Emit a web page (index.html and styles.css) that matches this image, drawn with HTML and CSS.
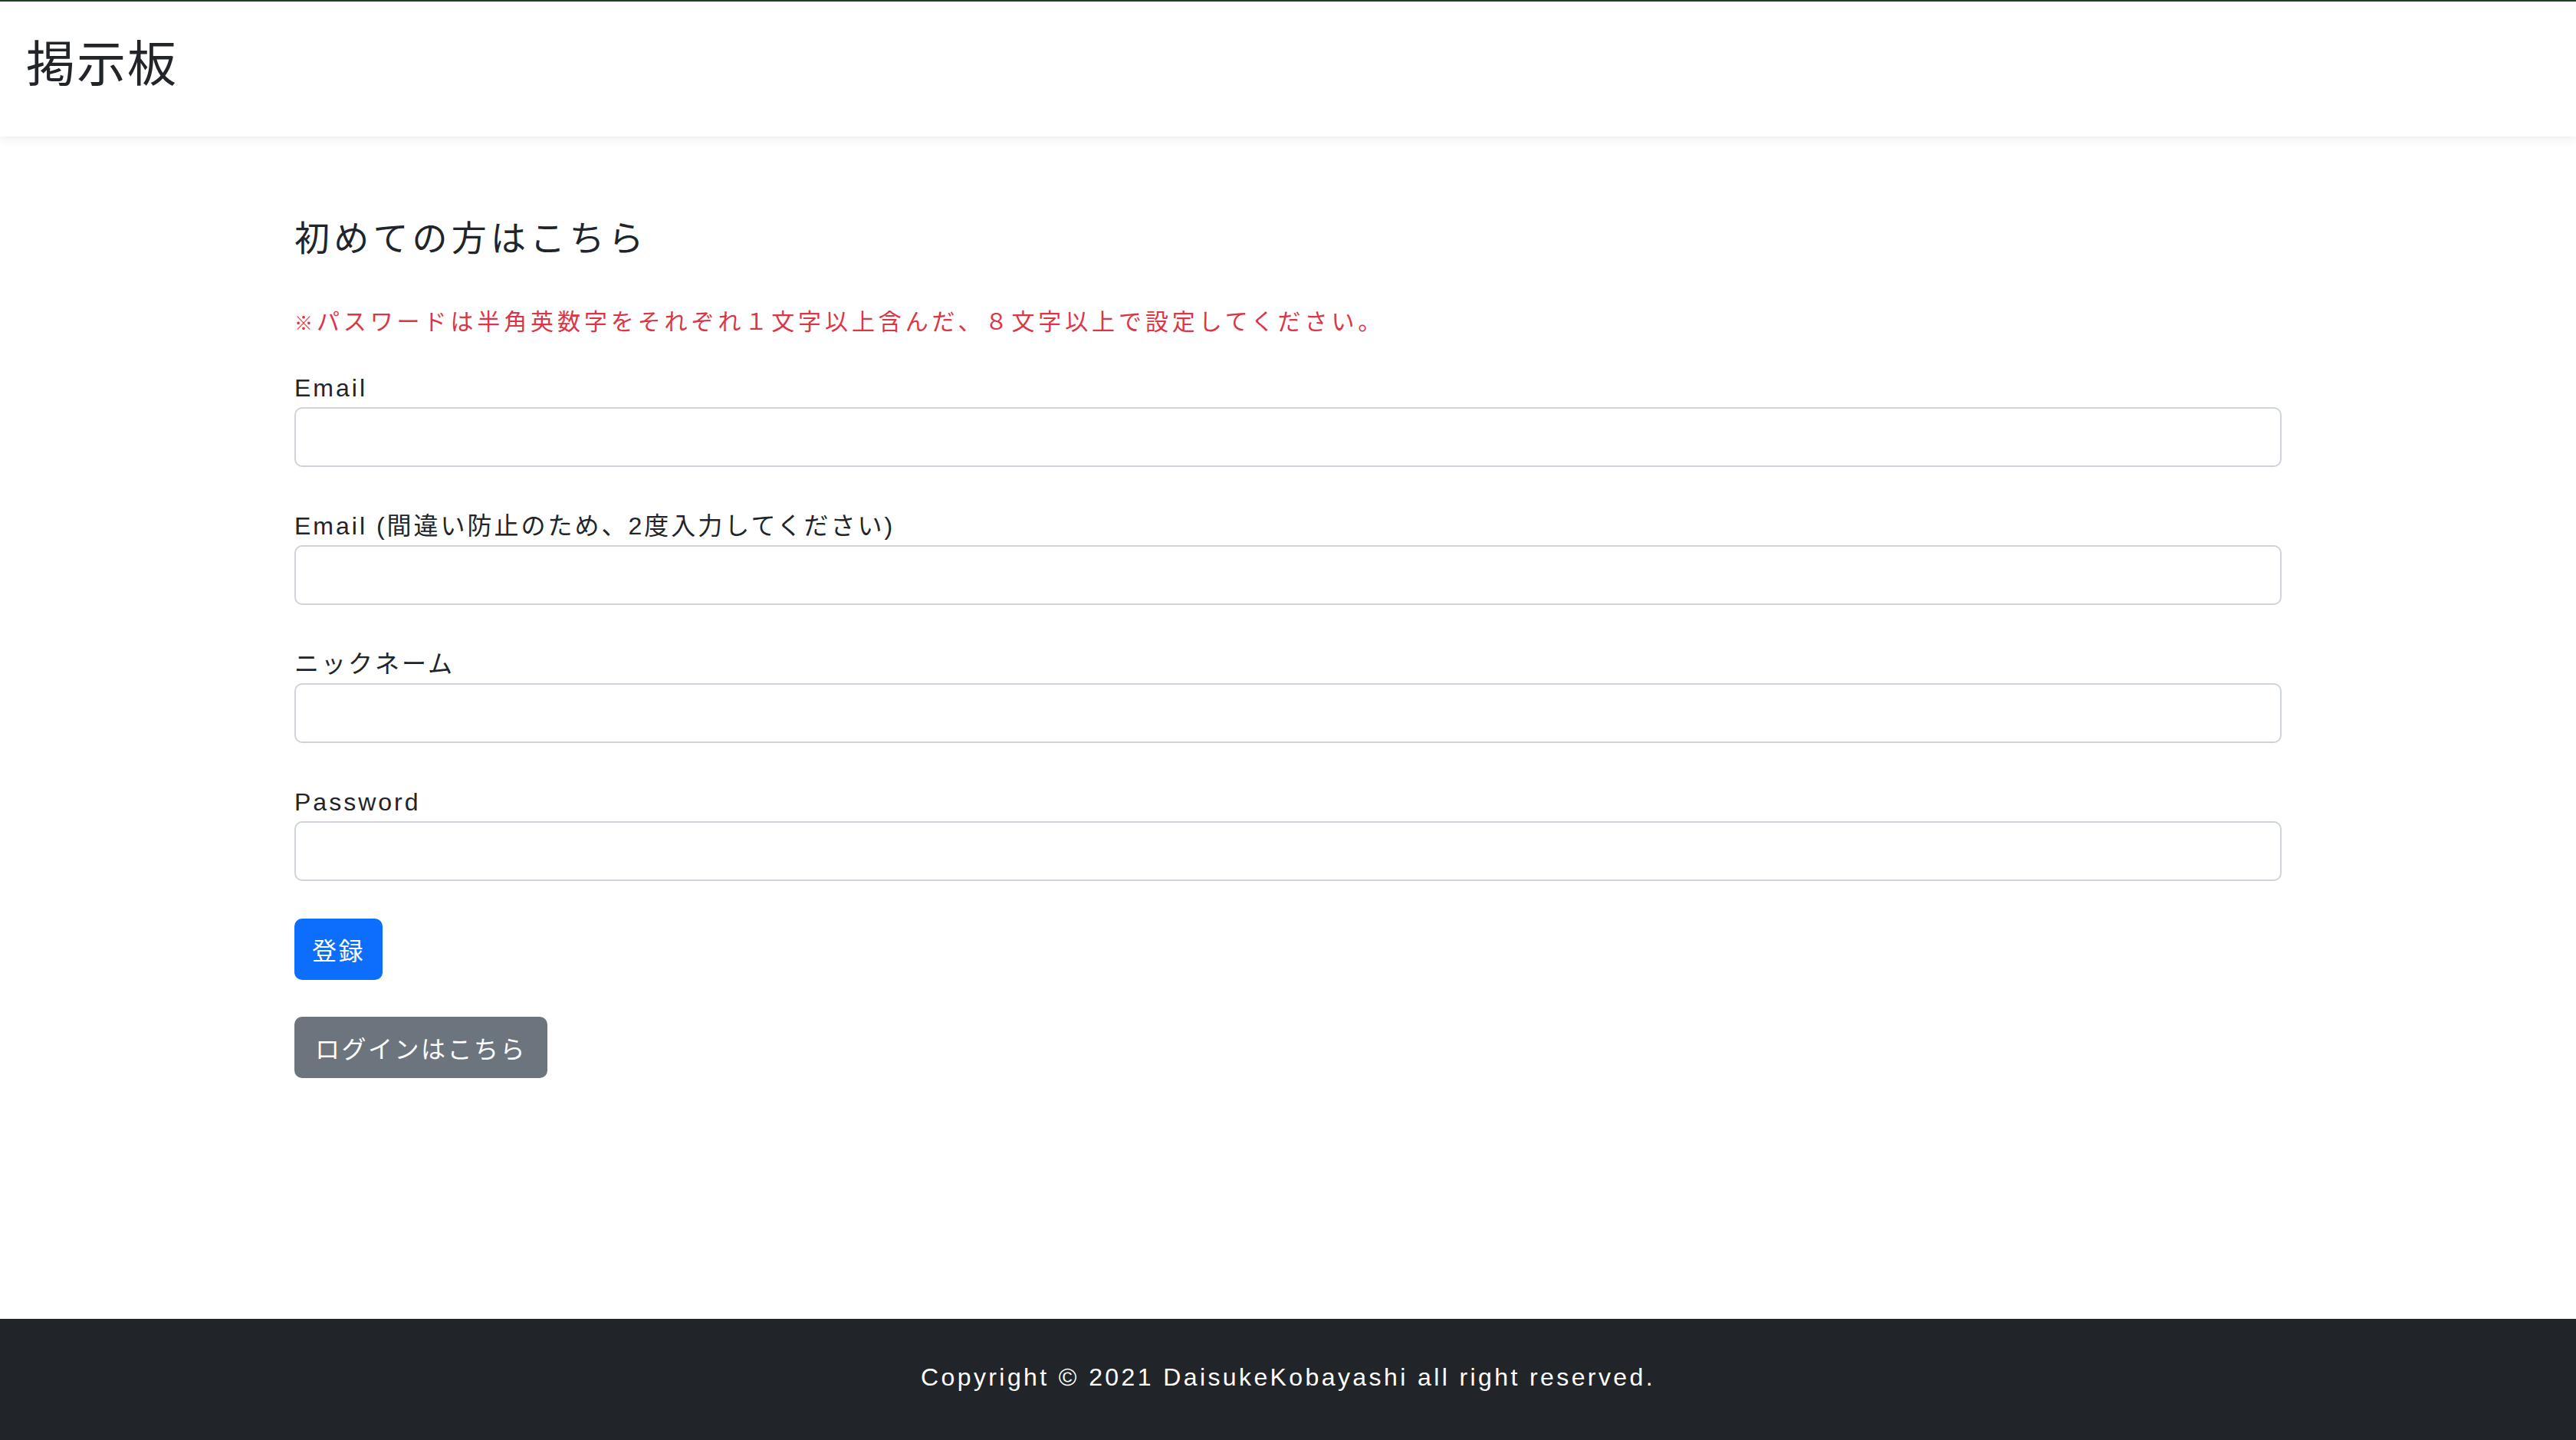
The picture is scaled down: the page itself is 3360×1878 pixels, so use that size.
FILE: index.html
```html
<!DOCTYPE html>
<html lang="ja">
<head>
  <meta charset="UTF-8" />
  <meta name="viewport" content="width=device-width, initial-scale=1.0"/>
  <title>掲示板</title>

  <link rel="stylesheet" href="styles.css">
</head>
<body>

  <header class="site-header">
    <a class="brand" href="#">掲示板</a>
  </header>

  <main class="main">
    <div class="container">
      <h2 class="page-title">初めての方はこちら</h2>
      <p class="note"><span class="mark">※</span>パスワードは半角英数字をそれぞれ１文字以上含んだ、８文字以上で設定してください。</p>

      <form class="signup-form" action="#" method="POST">
        <div class="field">
          <label for="email">Email</label>
          <input type="email" id="email" name="email" />
        </div>
        <div class="field">
          <label for="email_confirm">Email (間違い防止のため、2度入力してください)</label>
          <input type="email" id="email_confirm" name="email_confirm" />
        </div>
        <div class="field">
          <label for="nickname">ニックネーム</label>
          <input type="text" id="nickname" name="nickname" />
        </div>
        <div class="field">
          <label for="password">Password</label>
          <input type="password" id="password" name="password" />
        </div>
        <button type="submit" class="btn btn-primary">登録</button>
      </form>

      <a href="#" class="btn btn-secondary">ログインはこちら</a>
    </div>
  </main>

  <footer class="site-footer">
    <p>Copyright © 2021 DaisukeKobayashi all right reserved.</p>
  </footer>

</body>
</html>
```

FILE: styles.css
```css
* {
  box-sizing: border-box;
}

body {
  margin: 0;
  padding: 0;
  font-family: 'Liberation Sans', 'Noto Sans CJK JP', sans-serif;
  font-size: 32px;
  line-height: 48px;
  color: #212529;
  background: #fff;
  display: flex;
  flex-direction: column;
  min-height: 100vh;
}

.site-header {
  position: relative;
  z-index: 1;
  background: #fff;
  border-top: 2px solid #1e3f1e;
  padding: 28px 34px 52px;
  box-shadow: 0 4px 12px rgba(0, 0, 0, 0.07);
}

.brand {
  display: block;
  font-family: 'Noto Sans CJK JP', sans-serif;
  font-size: 64px;
  line-height: 96px;
  letter-spacing: 2px;
  color: #212529;
  text-decoration: none;
}

.main {
  flex: 1;
  padding-top: 104px;
}

.container {
  max-width: 2640px;
  margin: 0 auto;
  padding: 0 24px;
}

.page-title {
  margin: 0;
  font-family: 'Noto Sans CJK JP', sans-serif;
  font-size: 46px;
  font-weight: normal;
  line-height: 50px;
  letter-spacing: 5.2px;
}

.note {
  margin: 64px 0 0;
  height: 44px;
  font-family: 'Noto Sans CJK JP', sans-serif;
  font-size: 30px;
  line-height: 42px;
  letter-spacing: 4.9px;
  color: #dc3545;
}

.note .mark {
  font-size: 24px;
  line-height: 0;
}

.signup-form {
  margin-top: 42px;
  margin-bottom: 48px;
}

.field {
  margin-bottom: 53px;
}

.field:last-of-type {
  margin-bottom: 49px;
}

.field label {
  display: block;
  height: 48px;
  margin-bottom: 1px;
  letter-spacing: 3px;
}

.field input {
  display: block;
  width: 100%;
  height: 78px;
  padding: 12px 24px;
  font-size: 32px;
  border: 2px solid #ced4da;
  border-radius: 10px;
  background: #fff;
}

.btn {
  display: inline-block;
  font-family: 'Noto Sans CJK JP', sans-serif;
  font-size: 32px;
  line-height: 48px;
  letter-spacing: 2.5px;
  padding: 14px 21px;
  color: #fff;
  border: 2px solid transparent;
  border-radius: 10px;
  text-decoration: none;
  cursor: pointer;
}

.btn-primary {
  background: #0d6efd;
  border-color: #0d6efd;
}

.btn-secondary {
  padding: 14px 25px;
  background: #6c757d;
  border-color: #6c757d;
}

.site-footer {
  background: #212529;
  color: #fff;
  text-align: center;
  padding: 52px 0 58px;
}

.site-footer p {
  margin: 0;
  letter-spacing: 3.4px;
}
```
